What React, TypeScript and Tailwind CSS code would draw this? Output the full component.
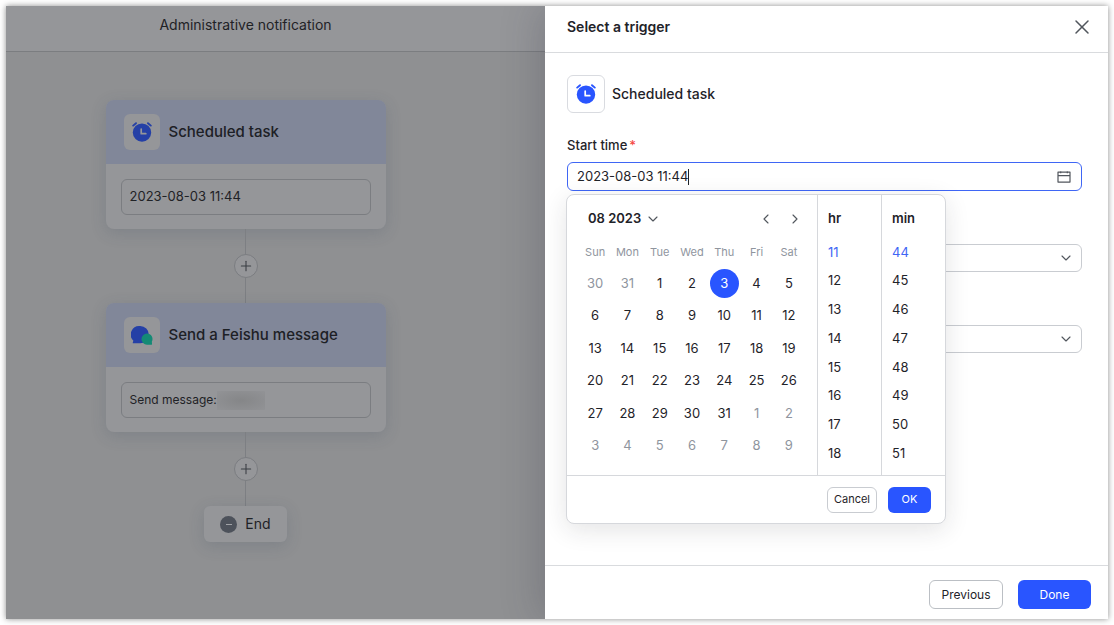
import React, { useState } from 'react';
import { ChevronDown, ChevronLeft, ChevronRight, Plus, X } from 'lucide-react';

const WEEKDAYS = ['Sun', 'Mon', 'Tue', 'Wed', 'Thu', 'Fri', 'Sat'];
const HOURS = [11, 12, 13, 14, 15, 16, 17, 18];
const MINUTES = [44, 45, 46, 47, 48, 49, 50, 51];

// August 2023 starts on a Tuesday, so the grid opens with 30 July
const WEEKS = Array.from({ length: 6 }, (_, week) =>
  Array.from({ length: 7 }, (_, day) => {
    const date = new Date(2023, 6, 30 + week * 7 + day);
    return { date: date.getDate(), inMonth: date.getMonth() === 7 };
  })
);

const AlarmIcon = ({ className, handClass }: { className: string; handClass: string }) => (
  <svg viewBox="0 0 20 20" className={className} fill="none" aria-hidden="true">
    <circle cx="10" cy="10.6" r="9.2" fill="currentColor" />
    <path d="M1.2 3.6 4 1.2M18.8 3.6 16 1.2" stroke="currentColor" strokeWidth="1.9" strokeLinecap="round" />
    <path d="M9.2 7v4.7h4.6" className={handClass} strokeWidth="1.7" strokeLinecap="round" strokeLinejoin="round" />
  </svg>
);

const ChatIcon = () => (
  <svg viewBox="0 0 22 20" className="w-[22px] h-5" aria-hidden="true">
    <path d="M9.2 1a8.6 8.6 0 0 1 0 17.3H2.3c-.5 0-.7-.5-.5-.9l.6-1.6A8.6 8.6 0 0 1 9.2 1z" fill="#2540a6" />
    <path d="M16 8.6a5.5 5.5 0 0 1 4.8 8.2l.3 2.2c0 .4-.2.7-.6.7H16a5.5 5.5 0 0 1 0-11.1z" fill="#148a75" />
  </svg>
);

const CalendarIcon = () => (
  <svg viewBox="0 0 16 16" className="w-4 h-4" fill="none" stroke="currentColor" strokeWidth="1.2" strokeLinejoin="round" aria-hidden="true">
    <path d="M2 3.1h12v10H2zM2 6.6h12M4.7 2.2v2M11.3 2.2v2" />
  </svg>
);

interface FlowCardProps {
  title: string;
  icon: React.ReactNode;
  children: React.ReactNode;
}

const FlowCard = ({ title, icon, children }: FlowCardProps) => (
  <section className="w-[280px] rounded-lg overflow-hidden bg-[#959699] shadow-[0_4px_16px_rgba(50,65,90,0.18)]">
    <div className="h-16 px-[18px] flex items-center gap-[9px] bg-[#818799]">
      <div className="w-9 h-9 rounded-md bg-[#959699] flex items-center justify-center">{icon}</div>
      <h2 className="text-[15px] font-medium text-[#1d2025]">{title}</h2>
    </div>
    <div className="px-[15px] pt-[15px] pb-[14px]">
      <div className="h-9 px-2 flex items-center border border-[#7b7d81] rounded-md text-[#1f2226]">
        {children}
      </div>
    </div>
  </section>
);

const Connector = () => (
  <div className="flex flex-col items-center">
    <div className="w-px h-[25px] bg-[#7d7f83]" />
    <button
      aria-label="Add step"
      className="w-6 h-6 rounded-full border border-[#7b7d81] bg-[#959699] text-[#3b3e44] flex items-center justify-center"
    >
      <Plus className="w-4 h-4" strokeWidth={1.6} />
    </button>
    <div className="w-px h-[25px] bg-[#7d7f83]" />
  </div>
);

interface TimeColumnProps {
  label: string;
  values: number[];
  selected: number;
  onSelect: (value: number) => void;
}

const TimeColumn = ({ label, values, selected, onSelect }: TimeColumnProps) => (
  <div className="w-16 pt-3 border-l border-[#d6d8dc]">
    <div className="h-[23px] pl-[10px] leading-[23px] font-semibold">{label}</div>
    <ul className="h-[230px] mt-2 flex flex-col">
      {values.map(value => (
        <li key={value} className="flex-1 flex">
          <button
            onClick={() => onSelect(value)}
            className={`flex-1 pl-[10px] text-left ${value === selected ? 'text-[#3f66f5]' : ''}`}
          >
            {value}
          </button>
        </li>
      ))}
    </ul>
  </div>
);

const App = () => {
  const [day, setDay] = useState(3);
  const [hour, setHour] = useState(11);
  const [minute, setMinute] = useState(44);

  const value = `2023-08-${String(day).padStart(2, '0')} ${hour}:${minute}`;

  return (
    <div className="min-h-screen p-1.5 flex bg-white font-[Inter,sans-serif] text-[#1f2329]">
      <div className="flex-1 flex overflow-hidden shadow-[0_0_6px_rgba(0,0,0,0.45)]">
        {/* Dimmed flow editor */}
        <main className="flex-1 min-w-0 bg-[#8f9092]">
          <header className="h-[46px] pr-[60px] pb-2 flex items-center justify-center bg-[#959699] border-b border-[#7b7d80]">
            <h1 className="text-sm text-[#1f2226]">Administrative notification</h1>
          </header>

          <div className="pt-12 pr-[60px] flex flex-col items-center">
            <FlowCard
              title="Scheduled task"
              icon={<AlarmIcon className="w-5 h-5 text-[#2540a6]" handClass="stroke-[#959699]" />}
            >
              <span className="text-[13px]">{value}</span>
            </FlowCard>
            <Connector />
            <FlowCard title="Send a Feishu message" icon={<ChatIcon />}>
              <span className="text-xs">Send message:</span>
              <span className="w-12 h-[19px] bg-[radial-gradient(ellipse,#858688,#929396)]" />
            </FlowCard>
            <Connector />
            <div className="h-9 px-4 flex items-center gap-2 rounded-md bg-[#959699] shadow-[0_4px_16px_rgba(50,65,90,0.18)]">
              <span className="w-[17px] h-[17px] rounded-full bg-[#4d525b] flex items-center justify-center">
                <span className="w-1.5 h-px bg-[#a0a2a6]" />
              </span>
              <span className="text-sm text-[#1f2226]">End</span>
            </div>
          </div>
        </main>

        {/* Trigger drawer */}
        <aside className="relative w-[563px] flex flex-col bg-white shadow-[-6px_0_36px_rgba(45,45,65,0.22)]">
          <header className="h-[47px] pl-[22px] pr-[14px] pb-1 flex items-center justify-between border-b border-[#d9dbde]">
            <h2 className="text-sm font-semibold">Select a trigger</h2>
            <button aria-label="Close" className="text-[#51565d]">
              <X className="w-6 h-6" strokeWidth={1.5} />
            </button>
          </header>

          <div className="flex-1 pl-[22px] pr-[26px] pt-[22px]">
            <div className="flex items-center gap-[7px]">
              <div className="w-[38px] h-[38px] rounded-md border border-[#d9dbe0] flex items-center justify-center">
                <AlarmIcon className="w-5 h-5 text-[#2955ff]" handClass="stroke-white" />
              </div>
              <h3 className="text-sm font-medium">Scheduled task</h3>
            </div>

            <label htmlFor="start-time" className="block mt-[22px] text-[13px] leading-5 font-medium">
              Start time<span className="ml-0.5 text-[#f54a45]">*</span>
            </label>
            <div className="relative mt-[7px] text-[13px]">
              <div className="h-[29px] px-[9px] flex items-center border border-[#3f66f5] rounded-md">
                <input
                  id="start-time"
                  type="text"
                  value={value}
                  readOnly
                  className="field-sizing-content outline-none"
                />
                <span className="w-px h-4 bg-[#1f2329]" />
                <button aria-label="Open calendar" className="ml-auto text-[#51565d]">
                  <CalendarIcon />
                </button>
              </div>

              {/* Date and time popup */}
              <div className="absolute z-10 top-8 -left-px w-[380px] bg-white border border-[#d6d8dc] rounded-lg shadow-[0_6px_24px_rgba(31,35,41,0.12)]">
                <div className="h-[281px] flex border-b border-[#d6d8dc]">
                  <div className="flex-1 px-3 pt-3">
                    <div className="h-[23px] pl-[9px] pr-0.5 flex items-center">
                      <button className="flex items-center gap-1 font-semibold">
                        08 2023
                        <ChevronDown className="w-4 h-4 text-[#51565d]" strokeWidth={1.7} />
                      </button>
                      <button aria-label="Previous month" className="ml-auto text-[#51565d]">
                        <ChevronLeft className="w-4 h-4" strokeWidth={1.7} />
                      </button>
                      <button aria-label="Next month" className="ml-[13px] text-[#51565d]">
                        <ChevronRight className="w-4 h-4" strokeWidth={1.7} />
                      </button>
                    </div>
                    <table className="w-full h-[224px] mt-2 table-fixed text-center">
                      <thead>
                        <tr className="h-[29px] text-[11px] text-[#8f959e]">
                          {WEEKDAYS.map(name => (
                            <th key={name} scope="col" className="font-normal">{name}</th>
                          ))}
                        </tr>
                      </thead>
                      <tbody>
                        {WEEKS.map((week, index) => (
                          <tr key={index} className="h-8">
                            {week.map(cell => (
                              <td key={cell.date} className="p-0">
                                <button
                                  onClick={() => cell.inMonth && setDay(cell.date)}
                                  className={`w-[29px] h-[29px] rounded-full ${
                                    !cell.inMonth
                                      ? 'text-[#8f959e]'
                                      : cell.date === day
                                        ? 'bg-[#2955ff] text-white'
                                        : ''
                                  }`}
                                >
                                  {cell.date}
                                </button>
                              </td>
                            ))}
                          </tr>
                        ))}
                      </tbody>
                    </table>
                  </div>
                  <TimeColumn label="hr" values={HOURS} selected={hour} onSelect={setHour} />
                  <TimeColumn label="min" values={MINUTES} selected={minute} onSelect={setMinute} />
                </div>
                <div className="h-[47px] pr-[14px] flex items-center justify-end gap-[11px] text-[11px]">
                  <button className="w-[50px] h-[26px] border border-[#c9ccd1] rounded-md">Cancel</button>
                  <button className="w-[43px] h-[26px] rounded-md bg-[#2955ff] text-white">OK</button>
                </div>
              </div>
            </div>

            {['Repeat', 'Time zone'].map(name => (
              <div key={name} className="relative mt-[52px] h-[29px] flex items-center">
                <select aria-label={name} className="w-full h-7 border border-[#c9ccd1] rounded-md appearance-none" />
                <ChevronDown className="absolute right-2 w-4 h-4 text-[#51565d] pointer-events-none" strokeWidth={1.7} />
              </div>
            ))}
          </div>

          <footer className="h-[54px] pt-1 pr-[17px] flex items-center justify-end gap-[15px] border-t border-[#d9dbde] text-xs">
            <button className="w-[74px] h-[29px] border border-[#bbbfc4] rounded-md">Previous</button>
            <button className="w-[73px] h-[29px] rounded-md bg-[#2955ff] text-white">Done</button>
          </footer>
        </aside>
      </div>
    </div>
  );
};

export default App;
